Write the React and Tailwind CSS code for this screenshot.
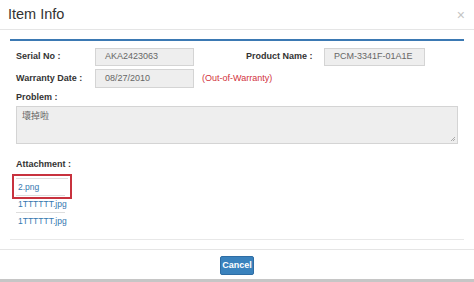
export default function App() {
  const files = ["2.png", "1TTTTTT.jpg", "1TTTTTT.jpg"];
  return (
    <div className="w-[474px] h-[282px] bg-white overflow-hidden flex flex-col text-[#333]" style={{ fontFamily: '"Liberation Sans", Arial, sans-serif' }}>
      <div className="h-[30px] shrink-0 border-b border-[#e5e5e5] flex items-center justify-between pl-[8px] pr-[9px]">
        <div className="text-[14.5px] leading-none">Item Info</div>
        <div className="text-[14px] leading-none text-[#c4c4c4]">×</div>
      </div>
      <div className="px-[10px] pt-[9px] pr-[10px]">
        <div className="h-[2px] bg-[#3b79b3]" />
        <div className="px-[6px] pt-[7px] pb-[10px] border-b border-[#e8e8e8]">
          <div className="flex items-center h-[18px]">
            <div className="w-[79px] text-[9px] font-bold">Serial No :</div>
            <div className="w-[99px] h-[18px] bg-[#eee] border border-[#d4d4d4] flex items-center px-[9px] text-[9px] text-[#666]">AKA2423063</div>
            <div className="w-[52px]" />
            <div className="w-[78px] text-[9px] font-bold">Product Name :</div>
            <div className="w-[101px] h-[18px] bg-[#eee] border border-[#d4d4d4] flex items-center px-[9px] text-[9px] text-[#666]">PCM-3341F-01A1E</div>
          </div>
          <div className="flex items-center h-[19px] mt-[3px]">
            <div className="w-[79px] text-[9px] font-bold">Warranty Date :</div>
            <div className="w-[99px] h-[19px] bg-[#eee] border border-[#d4d4d4] flex items-center px-[9px] text-[9px] text-[#666]">08/27/2010</div>
            <div className="ml-[8px] text-[9px] text-[#d2323c]">(Out-of-Warranty)</div>
          </div>
          <div className="mt-[4px] text-[9px] font-bold leading-[10px]">Problem :</div>
          <div className="relative mt-[4px] w-[442px] h-[38px] bg-[#eee] border border-[#d4d4d4] px-[5px] pt-[3px] text-[9px] text-[#666]" style={{ fontFamily: '"Liberation Sans", "Noto Sans CJK TC", sans-serif' }}>
            壞掉啦
            <svg className="absolute right-[1px] bottom-[1px]" width="6" height="6" viewBox="0 0 6 6">
              <path d="M1 5 L5 1 M3 5 L5 3" stroke="#999" strokeWidth="0.8" />
            </svg>
          </div>
          <div className="mt-[15px] text-[9px] font-bold leading-[10px]">Attachment :</div>
          <div className="mt-[9px] w-[49px]">
            {files.map((f, i) => (
              <div key={i} className={"h-[17px] border-t border-[#ddd] flex items-center pl-[2px] text-[8.5px] text-[#3478b0]" + (i === 0 ? " outline-[2px] outline-solid outline-[#c8323e] outline-offset-[2px] w-[52px]" : "")}>
                {f}
              </div>
            ))}
          </div>
        </div>
      </div>
      <div className="mt-[9px] border-t border-[#e5e5e5] flex justify-center pt-[6px]">
        <div className="w-[34px] h-[19px] rounded-[2px] bg-[#3a82bd] border border-[#2e6da4] text-white text-[9px] font-bold flex items-center justify-center">Cancel</div>
      </div>
      <div className="mt-auto h-[3px] bg-[#c6c6c6]" />
    </div>
  );
}
